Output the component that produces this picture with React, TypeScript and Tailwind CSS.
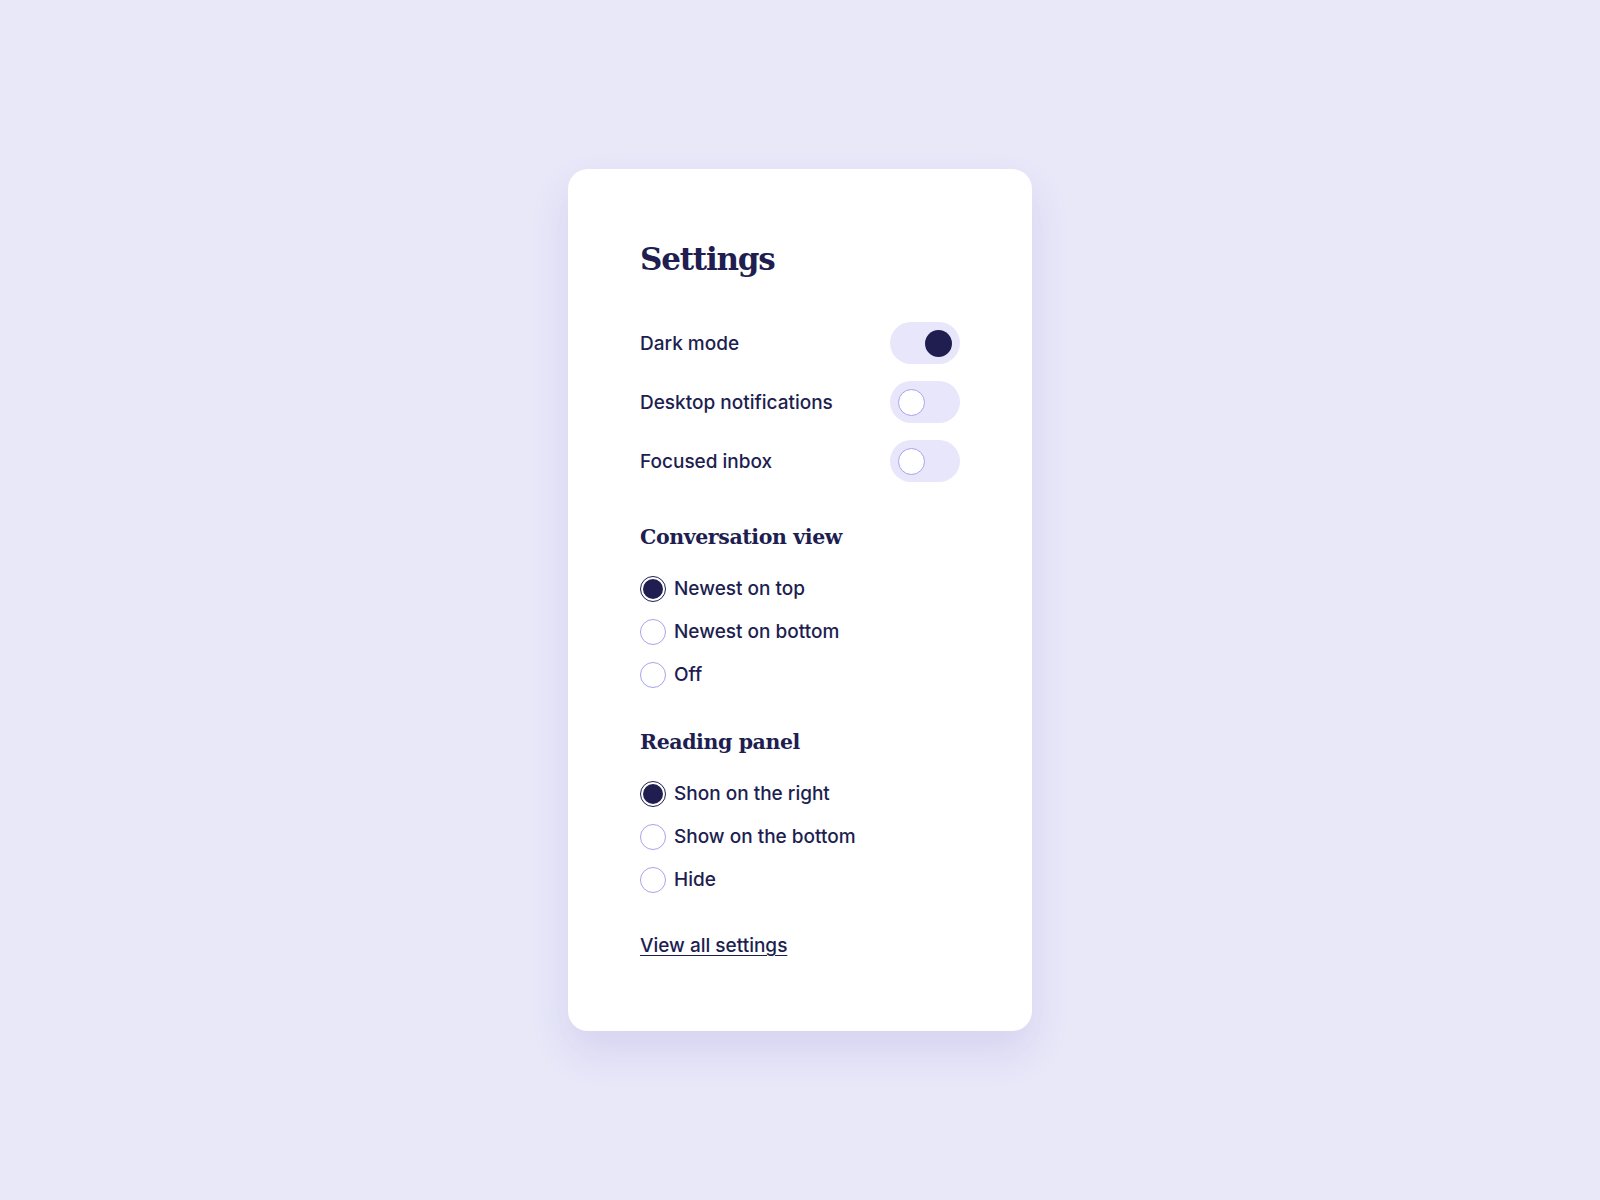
import { useState } from 'react';

const sans = { fontFamily: 'Inter, "Noto Sans", sans-serif' };
const serif = { fontFamily: '"DejaVu Serif", "Liberation Serif", serif' };

const Toggle = ({ on, onClick }: { on: boolean; onClick: () => void }) => (
  <button
    onClick={onClick}
    className={`flex h-[42px] w-[70px] items-center rounded-full bg-[#e8e6fb] px-[8px] ${on ? 'justify-end' : 'justify-start'}`}
  >
    {on ? (
      <span className="h-[27px] w-[27px] rounded-full bg-[#201e50]" />
    ) : (
      <span className="h-[27px] w-[27px] rounded-full border border-[#a8a3ea] bg-white" />
    )}
  </button>
);

const Radio = ({ checked, label, onClick }: { checked: boolean; label: string; onClick: () => void }) => (
  <button onClick={onClick} className="flex h-[27px] items-center gap-[8px] text-left">
    {checked ? (
      <span className="flex h-[26px] w-[26px] items-center justify-center rounded-full border-[1.5px] border-[#201e50] p-[2px]">
        <span className="h-full w-full rounded-full bg-[#201e50]" />
      </span>
    ) : (
      <span className="h-[26px] w-[26px] rounded-full border border-[#a8a3ea] bg-white" />
    )}
    <span className="text-[19px] leading-[27px] font-medium text-[#201e50]">{label}</span>
  </button>
);

export default function App() {
  const [toggles, setToggles] = useState([true, false, false]);
  const [conv, setConv] = useState(0);
  const [panel, setPanel] = useState(0);

  const toggleRows = ['Dark mode', 'Desktop notifications', 'Focused inbox'];
  const convOptions = ['Newest on top', 'Newest on bottom', 'Off'];
  const panelOptions = ['Shon on the right', 'Show on the bottom', 'Hide'];

  return (
    <div className="flex min-h-screen items-center justify-center bg-[#e8e8f9]" style={sans}>
      <div className="w-[464px] rounded-[20px] bg-white px-[72px] pt-[72px] pb-[72px] shadow-[0_20px_40px_rgba(70,60,170,0.12)]">
        <h1 className="text-[31px] leading-[36px] font-bold tracking-[-1.2px] text-[#201e50]" style={serif}>
          Settings
        </h1>

        {/* Toggles */}
        <div className="mt-[45px] flex flex-col gap-[17px]">
          {toggleRows.map((label, i) => (
            <div key={label} className="flex items-center justify-between">
              <span className="text-[19px] leading-[27px] font-medium text-[#201e50]">{label}</span>
              <Toggle
                on={toggles[i]}
                onClick={() => setToggles(toggles.map((t, j) => (j === i ? !t : t)))}
              />
            </div>
          ))}
        </div>

        {/* Conversation view */}
        <h2 className="mt-[41px] text-[20.5px] leading-[28px] font-bold tracking-[-0.4px] text-[#201e50]" style={serif}>
          Conversation view
        </h2>
        <div className="mt-[24px] flex flex-col gap-[16px]">
          {convOptions.map((label, i) => (
            <Radio key={label} label={label} checked={conv === i} onClick={() => setConv(i)} />
          ))}
        </div>

        {/* Reading panel */}
        <h2 className="mt-[40px] text-[20.5px] leading-[28px] font-bold tracking-[-0.4px] text-[#201e50]" style={serif}>
          Reading panel
        </h2>
        <div className="mt-[24px] flex flex-col gap-[16px]">
          {panelOptions.map((label, i) => (
            <Radio key={label} label={label} checked={panel === i} onClick={() => setPanel(i)} />
          ))}
        </div>

        <a
          href="#"
          className="mt-[39px] block w-fit text-[19px] leading-[27px] font-medium text-[#201e50] underline decoration-1 underline-offset-[3px]"
        >
          View all settings
        </a>
      </div>
    </div>
  );
}
